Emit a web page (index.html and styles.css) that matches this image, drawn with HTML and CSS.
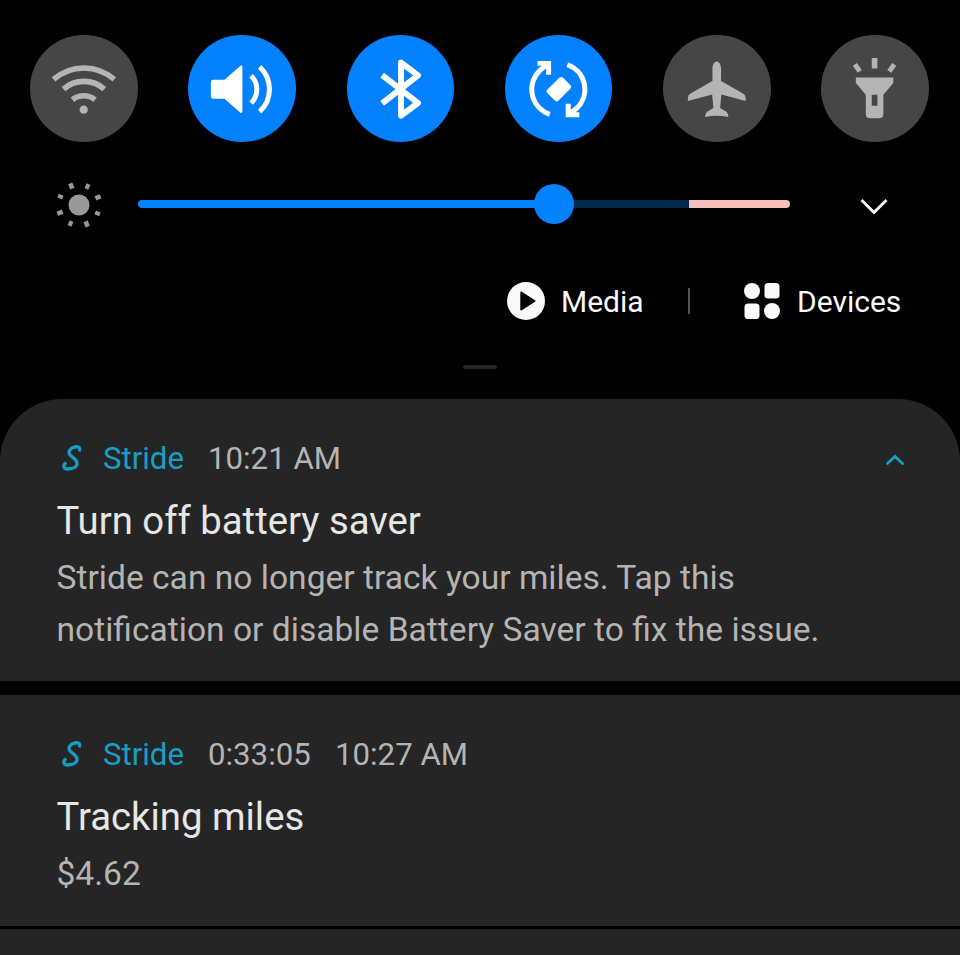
FILE: index.html
```html
<!DOCTYPE html>
<html lang="en">
<head>
<meta charset="utf-8">
<title>Notifications</title>
<link rel="stylesheet" href="styles.css">
</head>
<body>
<section class="panel">
  <div class="toggles">
    <div class="toggle">
      <svg viewBox="0 0 324 324" fill="none" stroke="currentColor" stroke-width="17">
        <path d="M71 134A138 138 0 0 1 254 134"/><path d="M101 163A93 93 0 0 1 224 163"/><path d="M128 195A55 55 0 0 1 196 195"/>
        <circle cx="162" cy="225" r="12.500" fill="currentColor" stroke="none"/>
      </svg>
    </div>
    <div class="toggle on">
      <svg viewBox="0 0 324 324" fill="none" stroke="currentColor" stroke-width="15">
        <path d="M76 135H110L158 93Q164 89 164 97V230Q164 238 158 234L110 192H76Q69 192 69 185V142Q69 135 76 135Z" fill="currentColor" stroke="none"/>
        <path d="M190 123A57 57 0 0 1 190 205"/><path d="M216 96A92 92 0 0 1 216 231"/>
      </svg>
    </div>
    <div class="toggle on">
      <svg viewBox="0 0 324 324" fill="none" stroke="currentColor" stroke-width="18" stroke-linejoin="round">
        <path d="M106 121L214 205L163 243V83L214 122L106 206"/>
      </svg>
    </div>
    <div class="toggle on">
      <svg viewBox="0 0 324 324" fill="none" stroke="currentColor" stroke-width="15">
        <path d="M135 239A79 79 0 0 1 106 106L126 90"/><path d="M98 85.500H131.500V120"/>
        <path d="M188 89A79 79 0 0 1 217 220L196 236"/><path d="M190.500 207V240.500H224"/>
        <path d="M112 88L130 86L129 106ZM192 220L210 238L192 240Z" fill="currentColor" stroke="none"/>
        <rect x="129" y="140" width="66" height="47" rx="8" transform="rotate(-45 162 163)" fill="currentColor" stroke="none"/>
      </svg>
    </div>
    <div class="toggle">
      <svg viewBox="0 0 324 324" fill="currentColor">
        <path d="M162 80C170 80 175 91 175 102V139L241 176Q249 181 249 188V199L176 179L172 220L192 232Q197 236 197 247Q178 243 162 243Q146 243 127 247Q127 236 132 232L152 220L148 179L75 199V188Q75 181 83 176L149 139V102C149 91 154 80 162 80Z"/>
      </svg>
    </div>
    <div class="toggle">
      <svg viewBox="0 0 324 324" fill="currentColor">
        <path d="M153 69H170V101H153ZM105 128H218V145L188 180V237Q188 251 174 251H149Q135 251 135 237V180L105 145ZM153 180V213H170V180Z" fill-rule="evenodd"/>
        <rect x="102" y="86" width="15" height="26" transform="rotate(-35 109.500 99)"/>
        <rect x="206" y="86" width="15" height="26" transform="rotate(35 213.500 99)"/>
      </svg>
    </div>
  </div>

  <div class="brightness">
    <svg class="sun" viewBox="-24 -24 48 48" fill="currentColor">
      <circle r="10.500"/>
      <path d="M0 -23.300V-17.700M0 23.300V17.700M-23.300 0H-17.700M23.300 0H17.700" stroke="currentColor" stroke-width="4.500" transform="rotate(-22)"/>
      <path d="M0 -23V-17.800M0 23V17.800M-23 0H-17.800M23 0H17.800" stroke="currentColor" stroke-width="4" transform="rotate(24.500)"/>
    </svg>
    <div class="slider">
      <div class="level"></div><div class="rest"></div><div class="limit"></div>
      <div class="thumb"></div>
    </div>
    <svg class="expand" viewBox="0 0 30 20" fill="none" stroke="currentColor" stroke-width="3"><path d="M2.500 3L15 15.500L27.500 3"/></svg>
  </div>

  <div class="shortcuts">
    <svg class="play" viewBox="0 0 38 38"><circle cx="19" cy="19" r="19" fill="#fafafa"/><path d="M14.300 10.500L27.500 19L14.300 27.500Z" stroke="#000" stroke-width="2" stroke-linejoin="round"/></svg>
    <span class="media">Media</span>
    <span class="divider"></span>
    <svg class="grid" viewBox="0 0 36 36" fill="#fafafa"><circle cx="8" cy="8" r="8"/><rect x="20.500" y="0" width="15" height="15.500" rx="3.500"/><rect x=".5" y="20.500" width="15" height="15.500" rx="3.500"/><circle cx="28" cy="28" r="8"/></svg>
    <span class="devices">Devices</span>
  </div>
  <div class="handle"></div>
</section>

<main class="list">
  <article class="card first">
    <header class="meta">
      <svg class="logo" viewBox="0 0 20 26"><path d="M17.500 5C18.500 1 14 1.300 10.500 2.800C6.500 4.800 6 8 8.500 10.500C11.500 13 15.500 15 15 19C14.500 22.500 9.500 24 5.500 24C1.500 24 1 20.500 3.200 18.500"/></svg>
      <span class="app">Stride</span><span>10:21 AM</span>
      <svg class="collapse" viewBox="0 0 20 12"><path d="M2.500 9.500L10 2.500L17.500 9.500"/></svg>
    </header>
    <h2>Turn off battery saver</h2>
    <p>Stride can no longer track your miles. Tap this<br>notification or disable Battery Saver to fix the issue.</p>
  </article>
  <article class="card second">
    <header class="meta">
      <svg class="logo" viewBox="0 0 20 26"><path d="M17.500 5C18.500 1 14 1.300 10.500 2.800C6.500 4.800 6 8 8.500 10.500C11.500 13 15.500 15 15 19C14.500 22.500 9.500 24 5.500 24C1.500 24 1 20.500 3.200 18.500"/></svg>
      <span class="app">Stride</span><span class="timer">0:33:05</span><span>10:27 AM</span>
    </header>
    <h2>Tracking miles</h2>
    <p>$4.62</p>
  </article>
  <div class="card next"></div>
</main>
</body>
</html>
```

FILE: styles.css
```css
* { box-sizing: border-box; }
body {
  margin: 0;
  width: 960px;
  height: 955px;
  overflow: hidden;
  background: #000;
  color: #fafafa;
  font-family: Roboto, "Liberation Sans", sans-serif;
}
svg { display: block; flex: none; }
.panel { height: 399px; padding-top: 34.5px; }
.toggles { display: flex; justify-content: space-between; padding: 0 31px 0 30px; }
.toggle { width: 107.5px; height: 107.5px; border-radius: 50%; background: #464646; color: #b4b4b4; }
.toggle.on { background: #0381fe; color: #fff; }

.brightness { display: flex; align-items: center; height: 48px; margin-top: 38.5px; padding-left: 55px; }
.sun { width: 48px; height: 48px; color: #999; }
.slider { position: relative; display: flex; width: 651.5px; height: 8px; margin: 0 0 1px 35px; border-radius: 4px; }
.level { width: 416px; background: #0381fe; border-radius: 4px 0 0 4px; }
.rest { width: 135px; background: #03294d; }
.limit { width: 100.5px; background: #f5bfbc; border-radius: 0 4px 4px 0; }
.thumb { position: absolute; left: 396px; top: -16px; width: 40px; height: 40px; border-radius: 50%; background: #0381fe; }
.expand { width: 30px; height: 20px; margin: 4px 0 0 69px; }

.shortcuts { display: flex; align-items: center; height: 40px; margin-top: 52.5px; padding-left: 507px; font-size: 30px; line-height: 40px; }
.play { width: 38px; height: 38px; }
.media, .devices { padding-top: 2px; }
.media { width: 82px; margin-left: 16px; white-space: nowrap; }
.divider { width: 2px; height: 26px; margin-left: 45px; background: #555; }
.grid { width: 36px; height: 36px; margin-left: 54px; }
.devices { margin-left: 17px; }
.handle { width: 34px; height: 4px; margin: 44px auto 0; border-radius: 2px; background: #262626; }

.card { background: #252525; padding-left: 56.5px; }
.first { height: 282px; padding-top: 40px; border-radius: 62px 62px 0 0; }
.second { height: 230.5px; margin-top: 14px; padding-top: 40px; }
.next { height: 30px; margin-top: 3px; }
.meta { display: flex; align-items: center; height: 40px; padding-left: 5.5px; font-size: 31.2px; line-height: 40px; color: #b4b4b4; white-space: nowrap; }
.logo { width: 20px; height: 26px; margin: 0 21px 2px 0; }
.logo path, .collapse path { fill: none; stroke: #159fc5; stroke-width: 3.3; stroke-linecap: round; }
.collapse path { stroke-width: 2.8; }
.app { width: 81px; margin-right: 24px; color: #159fc5; }
.timer { width: 103px; margin-right: 24px; }
.collapse { width: 20px; height: 12px; margin: 2px 55px 0 auto; }
h2 { margin: 17px 0 0; font-size: 38.3px; line-height: 50px; font-weight: 400; color: #e6e6e6; white-space: nowrap; }
p { margin: 6px 0 0; font-size: 33.6px; line-height: 51.5px; color: #b4b4b4; white-space: nowrap; }
```
